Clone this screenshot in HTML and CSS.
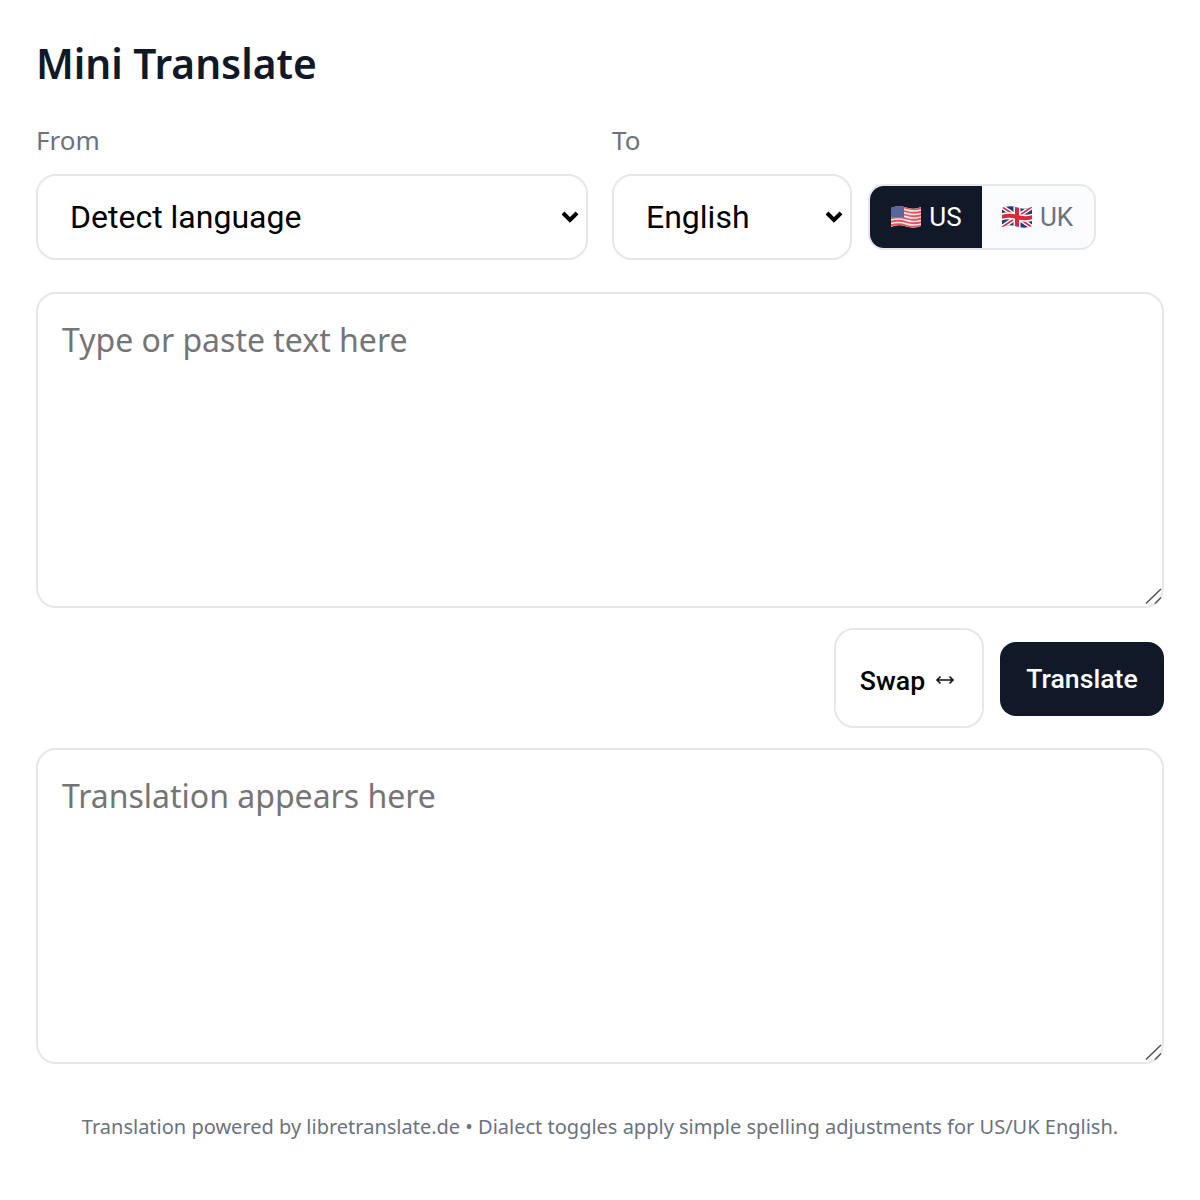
FILE: index.html
```html
<!DOCTYPE html>
<html lang="en">
<head>
    <meta charset="UTF-8">
    <meta name="viewport" content="width=device-width, initial-scale=1.0">
    <title>Mini Translate</title>
    <link rel="stylesheet" href="styles.css">
</head>
<body>
    <main class="app">
        <h1>Mini Translate</h1>

        <div class="lang-row">
            <div class="field field-from">
                <label for="from">From</label>
                <select id="from">
                    <option>Detect language</option>
                    <option>English</option>
                </select>
            </div>
            <div class="field field-to">
                <label for="to">To</label>
                <div class="to-row">
                    <select id="to">
                        <option>English</option>
                        <option>Spanish</option>
                    </select>
                    <div class="dialect">
                        <button class="dialect-btn active">
                            <svg class="flag" viewBox="0 0 32 24">
                                <defs>
                                    <clipPath id="flag-wave">
                                        <path d="M1 3Q8 0 16 2.500T31 2V21Q24 24 16 21.500T1 22Z"/>
                                    </clipPath>
                                </defs>
                                <g clip-path="url(#flag-wave)">
                                    <rect width="32" height="24" fill="#f6e9ea"/>
                                    <g fill="none" stroke="#e4525e" stroke-width="1.800">
                                        <path d="M0 3Q8 .5 16 3T32 3"/>
                                        <path d="M0 6.500Q8 4 16 6.500T32 6.500"/>
                                        <path d="M0 10Q8 7.500 16 10T32 10"/>
                                        <path d="M0 13.500Q8 11 16 13.500T32 13.500"/>
                                        <path d="M0 17Q8 14.500 16 17T32 17"/>
                                        <path d="M0 20.500Q8 18 16 20.500T32 20.500"/>
                                    </g>
                                    <rect width="14" height="12" fill="#56689b"/>
                                </g>
                            </svg>
                            US
                        </button>
                        <button class="dialect-btn">
                            <svg class="flag" viewBox="0 0 32 24">
                                <g clip-path="url(#flag-wave)">
                                    <rect width="32" height="24" fill="#24397f"/>
                                    <path d="M0 1l32 22M32 1L0 23" stroke="#fff" stroke-width="4.500"/>
                                    <path d="M0 1l32 22M32 1L0 23" stroke="#d8283c" stroke-width="1.600"/>
                                    <path d="M16 0v24M0 12Q8 9.500 16 12T32 12" fill="none" stroke="#fff" stroke-width="7"/>
                                    <path d="M16 0v24M0 12Q8 9.500 16 12T32 12" fill="none" stroke="#d8283c" stroke-width="4"/>
                                </g>
                            </svg>
                            UK
                        </button>
                    </div>
                </div>
            </div>
        </div>

        <div class="text-wrap">
            <textarea class="text-box" placeholder="Type or paste text here"></textarea>
            <svg class="grip" viewBox="0 0 18 18"><path d="M2 15.500L17 1M11 15.500L17 9.500"/></svg>
        </div>

        <div class="actions">
            <button class="btn-swap">
                Swap
                <svg class="swap-icon" viewBox="0 0 20 12"><path d="M2 6h16M5.500 2.500L2 6l3.500 3.500M14.500 2.500L18 6l-3.500 3.500"/></svg>
            </button>
            <button class="btn-translate">Translate</button>
        </div>

        <div class="text-wrap">
            <textarea class="text-box" placeholder="Translation appears here" readonly></textarea>
            <svg class="grip" viewBox="0 0 18 18"><path d="M2 15.500L17 1M11 15.500L17 9.500"/></svg>
        </div>

        <p class="note">Translation powered by libretranslate.de • Dialect toggles apply simple spelling adjustments for US/UK English.</p>
    </main>
</body>
</html>
```

FILE: styles.css
```css
* {
    box-sizing: border-box;
}

body {
    margin: 0;
    background-color: #fff;
    font-family: "Noto Sans", sans-serif;
    color: #111827;
}

.app {
    padding: 36px;
}

h1 {
    margin: 0 0 34px;
    font-size: 40.7px;
    line-height: 54px;
    font-weight: 600;
}

.lang-row {
    display: flex;
    gap: 24px;
    margin-bottom: 32px;
}

.field {
    display: flex;
    flex-direction: column;
    gap: 18px;
}

.field label {
    font-size: 26px;
    line-height: 32px;
    color: #6b7280;
}

.field-from {
    width: 552px;
}

.to-row {
    display: flex;
    align-items: center;
    gap: 16px;
}

/* native arrow is too small at this size, so it is drawn here */
select {
    appearance: none;
    height: 86px;
    padding: 0 32px;
    border: 2px solid #e5e7eb;
    border-radius: 20px;
    background: #fff url("data:image/svg+xml,%3Csvg xmlns='http://www.w3.org/2000/svg' width='20' height='14'%3E%3Cpath d='M3 3l7 7 7-7' fill='none' stroke='%23000' stroke-width='4'/%3E%3C/svg%3E") no-repeat right 6px center;
    font-family: Roboto, sans-serif;
    font-size: 32px;
    color: #000;
}

#from {
    width: 100%;
}

#to {
    width: 240px;
}

.dialect {
    display: flex;
    width: 228px;
    height: 66px;
    border: 2px solid #e5e7eb;
    border-radius: 16px;
    overflow: hidden;
    background-color: #fbfcfd;
}

.dialect-btn {
    display: flex;
    align-items: center;
    justify-content: center;
    gap: 7px;
    flex: 1;
    padding: 0 2px 0 0;
    border: 0;
    background: none;
    font-family: Roboto, sans-serif;
    font-size: 26px;
    color: #6b7280;
}

.dialect-btn.active {
    flex: 0 0 112px;
    padding: 0;
    background-color: #111827;
    color: #fff;
}

.flag {
    width: 32px;
    height: 24px;
}

.text-wrap {
    position: relative;
}

.text-box {
    display: block;
    width: 100%;
    height: 316px;
    padding: 22px 24px;
    border: 2px solid #e5e7eb;
    border-radius: 20px;
    font-family: "Noto Sans", sans-serif;
    font-size: 32px;
    line-height: 48px;
    outline: none;
    resize: none;
}

.grip {
    position: absolute;
    right: 2px;
    bottom: 2px;
    width: 18px;
    height: 18px;
    fill: none;
    stroke: #555;
    stroke-width: 1.500;
}

.actions {
    display: flex;
    justify-content: flex-end;
    align-items: center;
    gap: 16px;
    margin: 20px 0;
}

.btn-swap {
    display: flex;
    align-items: center;
    justify-content: center;
    gap: 10px;
    width: 150px;
    height: 100px;
    padding: 6px 3px 0 0;
    border: 2px solid #e5e7eb;
    border-radius: 20px;
    background-color: #fff;
    font-family: Roboto, sans-serif;
    font-size: 26.67px;
    font-weight: 500;
    color: #000;
}

.swap-icon {
    width: 20px;
    height: 12px;
    margin-top: -3px;
    fill: none;
    stroke: #111;
    stroke-width: 1.600;
}

.btn-translate {
    width: 164px;
    height: 74px;
    margin-top: 2px;
    border: 0;
    border-radius: 16px;
    background-color: #111827;
    font-family: Roboto, sans-serif;
    font-size: 26.67px;
    font-weight: 500;
    color: #fff;
}

.note {
    margin: 46px 0 0;
    font-size: 20px;
    line-height: 34px;
    text-align: center;
    color: #6b7280;
}
```
